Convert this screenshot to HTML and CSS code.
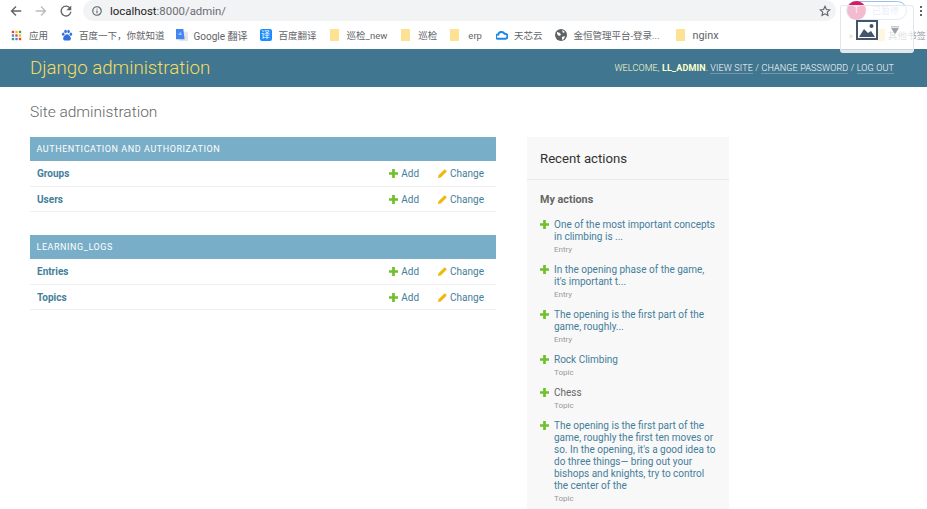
FILE: index.html
```html
<!DOCTYPE html>
<html lang="en">
  <head>
    <meta charset="UTF-8" />
    <title>Site administration | Django site admin</title>
    <link rel="stylesheet" href="styles.css">
  </head>
  <body>
    <div class="toolbar">
      <svg class="nav-icon" viewBox="0 0 16 16"><path d="M15 8H2M8 2L2 8l6 6" /></svg>
      <svg class="nav-icon off" viewBox="0 0 16 16"><path d="M1 8h13M8 2l6 6-6 6" /></svg>
      <svg class="nav-icon" viewBox="0 0 16 16"><path d="M13.500 4.500a6.500 6.500 0 1 0 1 4.500" /><path class="solid" d="M15 .5v6.500H8.500z" /></svg>
      <div class="omnibox">
        <svg class="info" viewBox="0 0 16 16"><circle cx="8" cy="8" r="6.800" /><path d="M8 7v4.400M8 4.200v1.500" /></svg>
        <span class="url">localhost<span class="url-rest">:8000/admin/</span></span>
        <svg class="star" viewBox="0 0 16 16"><path d="M8 1.800l1.900 4.200 4.500.5-3.400 3 1 4.500L8 11.700 4 14l1-4.500-3.400-3 4.500-.5z" /></svg>
      </div>
      <div class="profile"><span class="avatar">T</span><span class="paused">已暂停</span></div>
      <span class="kebab"><i></i><i></i><i></i></span>
    </div>

    <div class="bookmarks">
      <span class="bm apps">
        <svg width="11" height="11" viewBox="0 0 14 14">
          <rect x="1" y="1" width="3" height="3" fill="#ea4335" /><rect x="5.500" y="1" width="3" height="3" fill="#fbbc05" /><rect x="10" y="1" width="3" height="3" fill="#34a853" />
          <rect x="1" y="5.500" width="3" height="3" fill="#4285f4" /><rect x="5.500" y="5.500" width="3" height="3" fill="#ea4335" /><rect x="10" y="5.500" width="3" height="3" fill="#fbbc05" />
          <rect x="1" y="10" width="3" height="3" fill="#34a853" /><rect x="5.500" y="10" width="3" height="3" fill="#4285f4" /><rect x="10" y="10" width="3" height="3" fill="#ea4335" />
        </svg>
        应用
      </span>
      <span class="bm baidu">
        <svg width="12" height="12" viewBox="0 0 14 14" fill="#2f6fe0"><ellipse cx="2.600" cy="6" rx="1.500" ry="1.900" /><ellipse cx="5.300" cy="2.900" rx="1.500" ry="2" /><ellipse cx="8.800" cy="2.900" rx="1.500" ry="2" /><ellipse cx="11.500" cy="6" rx="1.500" ry="1.900" /><path d="M7 6c2 0 4.500 3 4.500 5s-1.500 2.500-2.500 2.500H5c-1 0-2.500-.5-2.500-2.500S5 6 7 6z" /></svg>
        百度一下，你就知道
      </span>
      <span class="bm gtrans">
        <svg width="12" height="14" viewBox="0 0 14 16"><rect x="4" y="4" width="10" height="11" fill="#e3e5e8" /><path d="M0 1h8.500l1.500 12H0z" fill="#4285f4" /><path d="M3 7h3.500M5 5v1" stroke="#fff" fill="none" /></svg>
        <span class="latin">Google 翻译</span>
      </span>
      <span class="bm btrans"><b class="yi">译</b>百度翻译</span>
      <span class="bm xj1"><i class="folder"></i>巡检_new</span>
      <span class="bm xj2"><i class="folder"></i>巡检</span>
      <span class="bm erp"><i class="folder"></i>erp</span>
      <span class="bm cloud">
        <svg width="12" height="10" viewBox="0 0 14 12"><path d="M2 10.500a2.500 2.500 0 0 1 .5-5A4 4 0 0 1 10 4.500a3 3 0 0 1 1 6z" fill="none" stroke="#1e88e5" stroke-width="2.400" /></svg>
        天芯云
      </span>
      <span class="bm globe">
        <svg width="12" height="12" viewBox="0 0 12 12"><circle cx="6" cy="6" r="6" fill="#5f6368" /><path d="M2 3l3 1 1 2-2 1-2-2zM7 1l3 2-2 1zM7 8l3-1-1 3-2 1z" fill="#fff" /></svg>
        金恒管理平台-登录...
      </span>
      <span class="bm nginx"><i class="folder"></i>nginx</span>
      <span class="bm more">»</span>
      <span class="bm others"><i class="folder"></i>其他书签</span>
    </div>

    <div id="header">
      <div id="branding">Django administration</div>
      <div id="user-tools">
        WELCOME, <strong>LL_ADMIN</strong>.
        <a href="#">VIEW SITE</a> / <a href="#">CHANGE PASSWORD</a> / <a href="#">LOG OUT</a>
      </div>
    </div>

    <div class="float-tip">
      <svg width="22" height="20" viewBox="0 0 22 20"><rect x="1" y="1" width="20" height="18" fill="#fff" stroke="#44546a" stroke-width="2" /><path d="M3 17l5-8 4 4 3-2 4 6z" fill="#44546a" /><circle cx="15.500" cy="6" r="2" fill="#44546a" /></svg>
      <svg class="funnel" width="10" height="10" viewBox="0 0 12 12"><path d="M1 1h10M2 3h8L6 9z" fill="#9aa0a6" stroke="#9aa0a6" /></svg>
    </div>

    <div id="content">
      <h1>Site administration</h1>
      <div class="columns">
        <div id="content-main">
          <div class="module">
            <div class="caption">AUTHENTICATION AND AUTHORIZATION</div>
            <div class="row">
              <a class="model" href="#">Groups</a>
              <a class="addlink" href="#"><svg viewBox="0 0 10 10"><path d="M3.500 0h3v3.500H10v3H6.500V10h-3V6.500H0v-3h3.500z" /></svg>Add</a>
              <a class="changelink" href="#"><svg viewBox="0 0 10 10"><path d="M0 10l.6-3L6.800.8a1 1 0 0 1 1.400 0l1 1a1 1 0 0 1 0 1.400L3 9.400z" /></svg>Change</a>
            </div>
            <div class="row">
              <a class="model" href="#">Users</a>
              <a class="addlink" href="#"><svg viewBox="0 0 10 10"><path d="M3.500 0h3v3.500H10v3H6.500V10h-3V6.500H0v-3h3.500z" /></svg>Add</a>
              <a class="changelink" href="#"><svg viewBox="0 0 10 10"><path d="M0 10l.6-3L6.800.8a1 1 0 0 1 1.400 0l1 1a1 1 0 0 1 0 1.400L3 9.400z" /></svg>Change</a>
            </div>
          </div>
          <div class="module">
            <div class="caption">LEARNING_LOGS</div>
            <div class="row">
              <a class="model" href="#">Entries</a>
              <a class="addlink" href="#"><svg viewBox="0 0 10 10"><path d="M3.500 0h3v3.500H10v3H6.500V10h-3V6.500H0v-3h3.500z" /></svg>Add</a>
              <a class="changelink" href="#"><svg viewBox="0 0 10 10"><path d="M0 10l.6-3L6.800.8a1 1 0 0 1 1.400 0l1 1a1 1 0 0 1 0 1.400L3 9.400z" /></svg>Change</a>
            </div>
            <div class="row">
              <a class="model" href="#">Topics</a>
              <a class="addlink" href="#"><svg viewBox="0 0 10 10"><path d="M3.500 0h3v3.500H10v3H6.500V10h-3V6.500H0v-3h3.500z" /></svg>Add</a>
              <a class="changelink" href="#"><svg viewBox="0 0 10 10"><path d="M0 10l.6-3L6.800.8a1 1 0 0 1 1.400 0l1 1a1 1 0 0 1 0 1.400L3 9.400z" /></svg>Change</a>
            </div>
          </div>
        </div>

        <div id="content-related">
          <h2>Recent actions</h2>
          <h3>My actions</h3>
          <ul class="actionlist">
            <li><svg viewBox="0 0 10 10"><path d="M3.500 0h3v3.500H10v3H6.500V10h-3V6.500H0v-3h3.500z" /></svg><div><a href="#">One of the most important concepts in climbing is ...</a><span class="mini">Entry</span></div></li>
            <li><svg viewBox="0 0 10 10"><path d="M3.500 0h3v3.500H10v3H6.500V10h-3V6.500H0v-3h3.500z" /></svg><div><a href="#">In the opening phase of the game, it's important t...</a><span class="mini">Entry</span></div></li>
            <li><svg viewBox="0 0 10 10"><path d="M3.500 0h3v3.500H10v3H6.500V10h-3V6.500H0v-3h3.500z" /></svg><div><a href="#">The opening is the first part of the game, roughly...</a><span class="mini">Entry</span></div></li>
            <li><svg viewBox="0 0 10 10"><path d="M3.500 0h3v3.500H10v3H6.500V10h-3V6.500H0v-3h3.500z" /></svg><div><a href="#">Rock Climbing</a><span class="mini">Topic</span></div></li>
            <li><svg viewBox="0 0 10 10"><path d="M3.500 0h3v3.500H10v3H6.500V10h-3V6.500H0v-3h3.500z" /></svg><div><a class="plain" href="#">Chess</a><span class="mini">Topic</span></div></li>
            <li><svg viewBox="0 0 10 10"><path d="M3.500 0h3v3.500H10v3H6.500V10h-3V6.500H0v-3h3.500z" /></svg><div><a href="#">The opening is the first part of the game, roughly the first ten moves or so. In the opening, it's a good idea to do three things— bring out your bishops and knights, try to control the center of the</a><span class="mini">Topic</span></div></li>
          </ul>
        </div>
      </div>
    </div>
  </body>
</html>
```

FILE: styles.css
```css
html,
body {
  height: 100%;
}
body {
  margin: 0;
  height: 509px;
  overflow: hidden;
  position: relative;
  background-color: #fff;
  color: #333;
  font-family: Roboto, "Noto Sans CJK SC", sans-serif;
  font-size: 14px;
}
a {
  text-decoration: none;
}

/* browser chrome */
.toolbar {
  height: 21px;
  display: flex;
  align-items: center;
  padding-left: 10px;
}
.nav-icon {
  width: 12px;
  height: 12px;
  fill: none;
  stroke: #5f6368;
  stroke-width: 1.800;
}
.nav-icon + .nav-icon {
  margin-left: 13px;
}
.nav-icon.off {
  stroke: #b9bcc0;
}
.nav-icon .solid {
  fill: #5f6368;
  stroke: none;
}
.omnibox {
  width: 753px;
  height: 21px;
  margin-left: 11px;
  padding: 0 5px 0 9px;
  box-sizing: border-box;
  background-color: #f1f3f4;
  border-radius: 11px;
  display: flex;
  align-items: center;
  font-size: 11.400px;
}
.info {
  width: 10px;
  height: 10px;
  fill: none;
  stroke: #5f6368;
  stroke-width: 1.800;
  margin-right: 8px;
}
.url {
  color: #202124;
  flex: 1;
}
.url-rest {
  color: #6a6d72;
}
.star {
  width: 12px;
  height: 12px;
  fill: none;
  stroke: #5f6368;
  stroke-width: 1.500;
}
.profile {
  width: 61px;
  height: 19px;
  margin-left: 10px;
  box-sizing: border-box;
  border: 1px solid #9dbcf0;
  border-radius: 10px;
  display: flex;
  align-items: center;
  color: #a9c4f2;
  font-size: 9px;
  white-space: nowrap;
}
.avatar {
  width: 19px;
  height: 19px;
  border-radius: 50%;
  background-color: #d81b60;
  color: #f5d0dd;
  font-size: 9px;
  line-height: 19px;
  text-align: center;
  margin-right: 6px;
  flex: none;
}
.kebab {
  display: flex;
  flex-direction: column;
  gap: 2px;
  margin-left: 13px;
}
.kebab i {
  width: 2px;
  height: 2px;
  background-color: #5f6368;
}

.bookmarks {
  height: 28px;
  display: flex;
  align-items: center;
  font-size: 9.500px;
  color: #5f6368;
  white-space: nowrap;
}
.bm {
  display: flex;
  align-items: center;
  gap: 7px;
  flex: none;
}
.latin {
  font-size: 10px;
}
.apps { margin-left: 11px; }
.baidu { margin-left: 13px; gap: 6px; }
.gtrans { margin-left: 11px; gap: 6px; }
.btrans { margin-left: 12px; }
.xj1 { margin-left: 13px; gap: 8px; }
.xj2 { margin-left: 14px; gap: 8px; }
.erp { margin-left: 13px; gap: 9px; }
.cloud { margin-left: 14px; gap: 6px; }
.globe { margin-left: 13px; gap: 6px; }
.nginx { margin-left: 16px; gap: 8px; font-size: 10.800px; }
.more { margin-left: 130px; }
.others { margin-left: 23px; gap: 3px; color: #9aa0a6; }
.yi {
  width: 12px;
  height: 12px;
  background-color: #1a8cff;
  border-radius: 2px;
  color: #fff;
  font-size: 9px;
  font-weight: 400;
  line-height: 12px;
  text-align: center;
}
.folder {
  width: 9px;
  height: 12px;
  background-color: #fde293;
  display: block;
}
.float-tip {
  position: absolute;
  left: 840px;
  top: 5px;
  width: 74px;
  height: 48px;
  box-sizing: border-box;
  border: 1px solid #e3e7ea;
  border-bottom-width: 3px;
  border-radius: 3px;
  background-color: rgba(255, 255, 255, 0.7);
  display: flex;
  justify-content: space-between;
  padding: 14px 13px 0 15px;
}
.funnel {
  margin-top: 6px;
}

/* admin page */
#header {
  height: 38px;
  background-color: #417690;
  display: flex;
  justify-content: space-between;
  align-items: center;
  padding: 0 33px 0 30px;
}
#branding {
  color: #f5dd5d;
  font-size: 18.700px;
  font-weight: 300;
}
#user-tools {
  color: #ffc;
  font-size: 9px;
  font-weight: 300;
  letter-spacing: 0.140px;
}
#user-tools a {
  color: #fff;
  border-bottom: 1px solid rgba(255, 255, 255, 0.25);
}
#user-tools strong {
  font-weight: 700;
}
#content {
  padding: 16px 30px 0;
}
h1 {
  margin: 0 0 16px;
  color: #666;
  font-size: 15.500px;
  font-weight: 300;
  line-height: 18px;
}
.columns {
  display: flex;
  gap: 31px;
}
#content-main {
  width: 466px;
}
.module {
  margin-bottom: 23px;
}
.caption {
  height: 24px;
  line-height: 25px;
  padding-left: 6.500px;
  background-color: #79aec8;
  color: #fff;
  font-size: 9px;
  letter-spacing: 0.560px;
}
.row {
  height: 24px;
  border-bottom: 1px solid #eee;
  padding: 0 12px 0 7px;
  display: flex;
  align-items: center;
  font-size: 10px;
}
.caption + .row {
  height: 25px;
}
.model {
  color: #447e9b;
  font-weight: 700;
  flex: 1;
}
.addlink,
.changelink {
  color: #447e9b;
  display: flex;
  align-items: center;
  gap: 3px;
}
.addlink svg,
.actionlist svg {
  width: 9px;
  height: 9px;
  fill: #70bf2b;
  flex: none;
}
.changelink {
  margin-left: 19px;
}
.changelink svg {
  width: 9px;
  height: 9px;
  fill: #efb80b;
}
#content-related {
  width: 202px;
  background-color: #f8f8f8;
  height: 372px;
}
h2 {
  margin: 0;
  padding: 0 13px;
  height: 42px;
  line-height: 43px;
  border-bottom: 1px solid #eaeaea;
  color: #333;
  font-size: 13.200px;
  font-weight: 400;
}
h3 {
  margin: 14px 13px 0;
  color: #666;
  font-size: 10.800px;
  font-weight: 700;
  line-height: 12px;
}
.actionlist {
  list-style: none;
  margin: 13px 13px 0;
  padding: 0;
  font-size: 10px;
  line-height: 12px;
}
.actionlist li {
  display: flex;
  gap: 5px;
  margin-bottom: 8px;
}
.actionlist svg {
  margin-top: 1px;
}
.actionlist a {
  color: #447e9b;
  display: block;
}
.actionlist a.plain {
  color: #666;
}
.mini {
  display: block;
  color: #999;
  font-size: 8px;
  line-height: 13px;
}
```
